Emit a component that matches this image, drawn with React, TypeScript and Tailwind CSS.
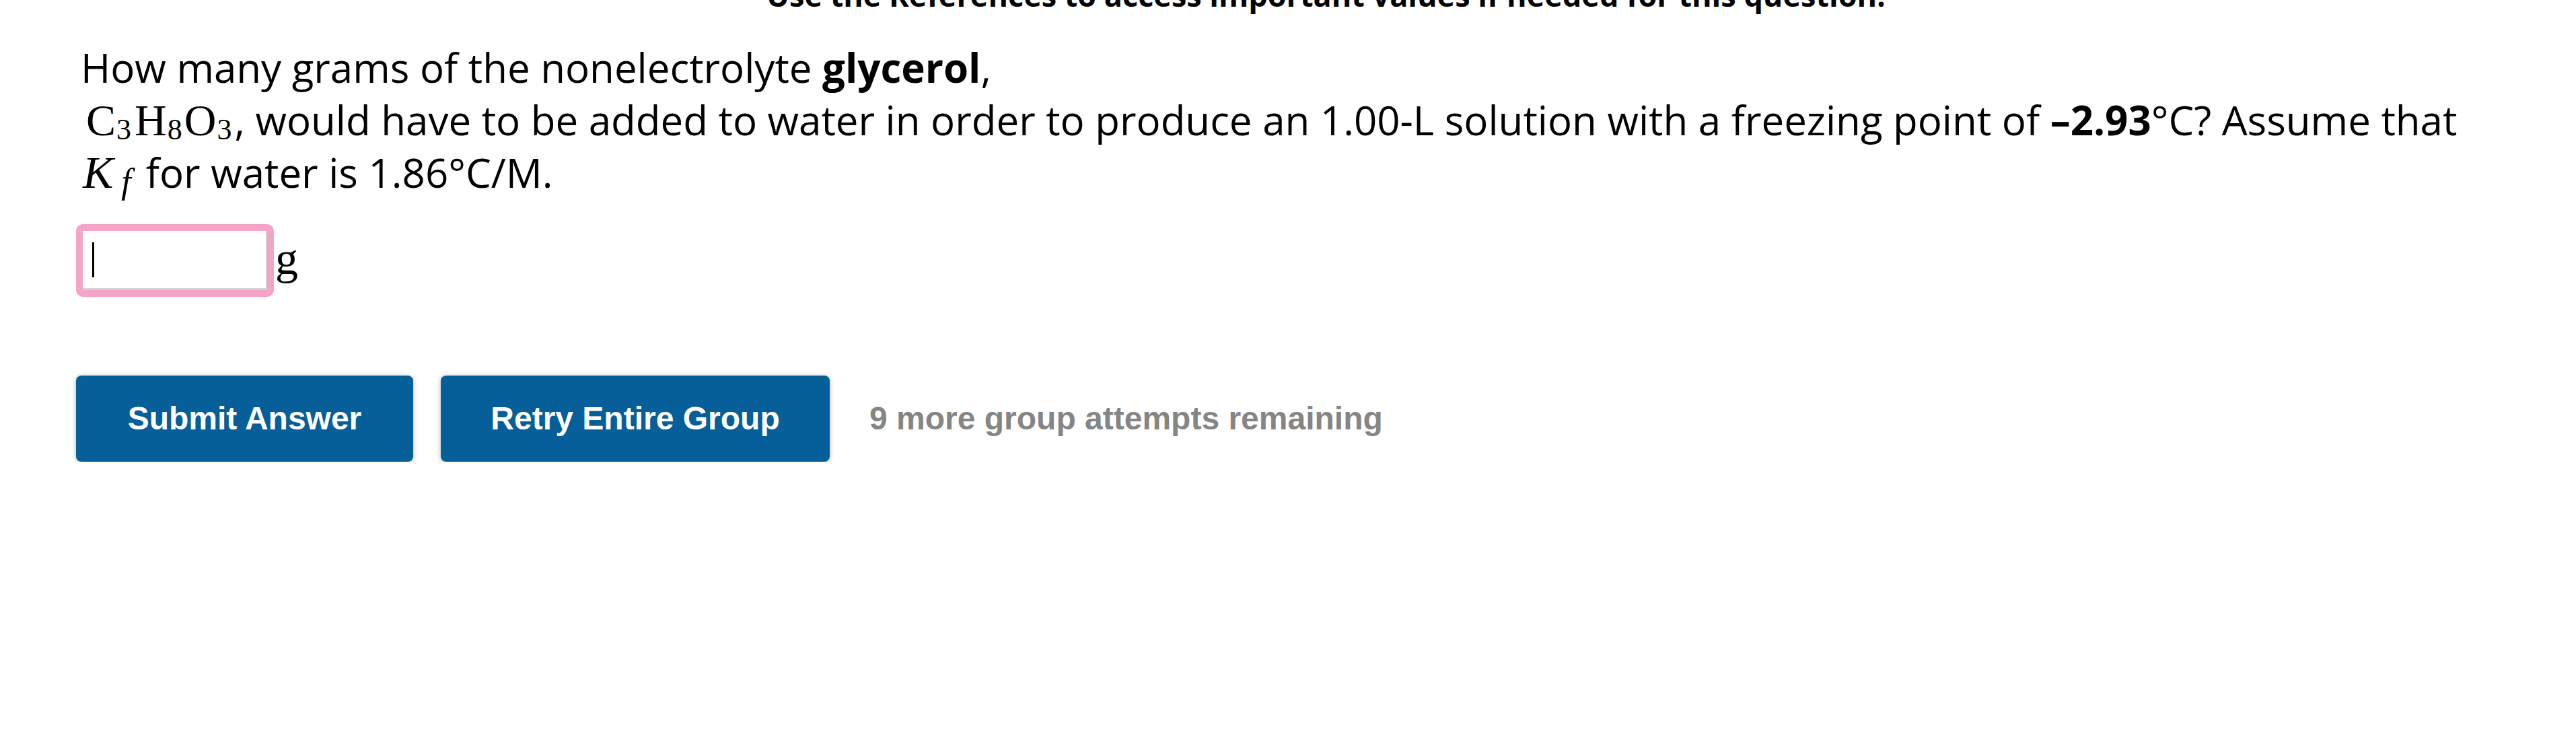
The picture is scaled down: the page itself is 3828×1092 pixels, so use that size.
const serif = "font-['Liberation_Serif','Times_New_Roman',serif]";

function Sub({ children, className = "" }: { children: string; className?: string }) {
  return (
    <span className={`relative top-[6px] text-[44px] leading-none ${serif} ${className}`}>
      {children}
    </span>
  );
}

function Glycerol() {
  return (
    <span className="ml-[8px]">
      <span className={`text-[66px] leading-none ${serif}`}>C</span>
      <Sub className="ml-[1px] mr-[5px]">3</Sub>
      <span className={`text-[66px] leading-none ${serif}`}>H</span>
      <Sub className="ml-[1px] mr-[3px]">8</Sub>
      <span className={`text-[66px] leading-none ${serif}`}>O</span>
      <Sub className="ml-[1px] mr-[4px]">3</Sub>
    </span>
  );
}

function FreezingConstant() {
  return (
    <span className="ml-[3px]">
      <span className={`text-[68px] italic leading-none ${serif}`}>K</span>
      <span className={`relative top-[8px] ml-[12px] mr-[22px] text-[52px] italic leading-none ${serif}`}>
        f
      </span>
    </span>
  );
}

export default function App() {
  return (
    <div className="flex flex-col bg-white pl-[113px] text-black">
      <p className="-mt-[38px] text-center text-[45px] font-bold leading-[61px] font-['Open_Sans',sans-serif]">
        Use the References to access important values if needed for this question.
      </p>

      <div className="mt-[38px] ml-[7px] whitespace-nowrap text-[60px] leading-[78px] font-['Open_Sans',sans-serif]">
        <div>
          How many grams of the nonelectrolyte <b className="font-bold">glycerol</b>,
        </div>
        <div>
          <Glycerol />, would have to be added to water in order to produce an 1.00-L solution with a
          freezing point of <b className="font-bold">–2.93</b>°C? Assume that
        </div>
        <div>
          <FreezingConstant />for water is 1.86°C/M.
        </div>
      </div>

      <div className="mt-[38px] flex items-start">
        <div className="h-[108px] w-[294px] rounded-[10px] border-[10px] border-[#f5a3c7] bg-white">
          <div className="flex h-full w-full items-center border-r-[2px] border-b-[3px] border-[#d2d2d2]">
            <span className="ml-[14px] h-[52px] w-[3px] bg-black" />
          </div>
        </div>
        <span className={`ml-[2px] mt-[17px] text-[68px] leading-none ${serif}`}>g</span>
      </div>

      <div className="mt-[117px] flex items-center font-['Liberation_Sans',Arial,sans-serif]">
        <button
          type="button"
          className="h-[128px] w-[501px] rounded-[8px] bg-[#065f99] text-[48px] font-bold text-white shadow-[0_1px_7px_rgba(0,0,0,0.3)]"
        >
          Submit Answer
        </button>
        <button
          type="button"
          className="ml-[41px] h-[128px] w-[578px] rounded-[8px] bg-[#065f99] text-[48px] font-bold text-white shadow-[0_1px_7px_rgba(0,0,0,0.3)]"
        >
          Retry Entire Group
        </button>
        <span className="ml-[59px] text-[48px] font-bold text-[#858585]">
          9 more group attempts remaining
        </span>
      </div>
    </div>
  );
}
